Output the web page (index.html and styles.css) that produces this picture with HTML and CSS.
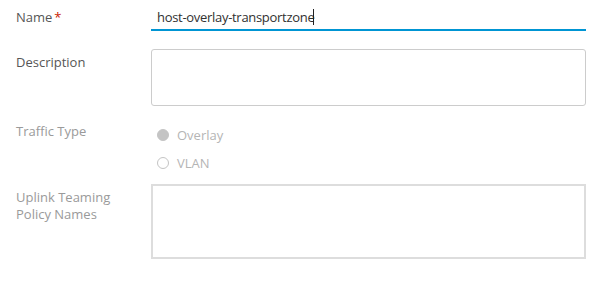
FILE: index.html
```html
<!DOCTYPE html>
<html lang="en">
<head>
    <meta charset="UTF-8">
    <title>Transport Zone</title>
    <link rel="stylesheet" href="styles.css">
</head>
<body>
    <form class="zone-form">
        <div class="form-row row-name">
            <label class="form-label required" for="name">Name</label>
            <div class="form-control">
                <input id="name" class="text-input" type="text" value="host-overlay-transportzone">
                <span class="caret"></span>
            </div>
        </div>
        <div class="form-row row-desc">
            <label class="form-label" for="desc">Description</label>
            <div class="form-control">
                <textarea id="desc" class="text-area"></textarea>
            </div>
        </div>
        <div class="form-row row-traffic">
            <span class="form-label disabled">Traffic Type</span>
            <div class="form-control radios">
                <label class="radio checked"><span class="radio-dot"></span>Overlay</label>
                <label class="radio"><span class="radio-dot"></span>VLAN</label>
            </div>
        </div>
        <div class="form-row row-uplink">
            <span class="form-label disabled">Uplink Teaming<br>Policy Names</span>
            <div class="form-control">
                <div class="list-box"></div>
            </div>
        </div>
    </form>
</body>
</html>
```

FILE: styles.css
```css
:root {
    --label-color: #565656;
    --disabled-color: #9a9a9a;
    --radio-text: #b5b5b5;
    --accent: #0095d3;
    --required: #c92100;
    --border: #cccccc;
    --border-light: #dddddd;
}

body {
    margin: 0;
    background: #fff;
    font-family: "Open Sans", Arial, sans-serif;
    font-size: 13px;
    color: var(--label-color);
}

.zone-form {
    padding: 5px 16px 0 16px;
}

.form-row {
    display: flex;
}

.form-label {
    width: 135px;
    flex: 0 0 135px;
    line-height: 16px;
}

.form-label.disabled {
    color: var(--disabled-color);
}

.required::after {
    content: "*";
    color: var(--required);
    margin-left: 2px;
}

.form-control {
    width: 435px;
    position: relative;
}

/* name */
.row-name .form-label {
    padding-top: 4px;
}

.text-input {
    display: block;
    box-sizing: border-box;
    width: 100%;
    height: 26px;
    margin: 0;
    padding: 0 6px 1px;
    border: none;
    border-bottom: 2px solid var(--accent);
    font-family: inherit;
    font-size: 13px;
    letter-spacing: -0.3px;
    color: #313131;
    outline: none;
}

.caret {
    position: absolute;
    left: 162px;
    top: 4px;
    width: 1px;
    height: 16px;
    background: #222;
}

/* description */
.row-desc {
    margin-top: 18px;
}

.row-desc .form-label {
    padding-top: 5px;
}

.text-area {
    display: block;
    box-sizing: border-box;
    width: 100%;
    height: 57px;
    margin: 0;
    border: 1px solid var(--border);
    border-radius: 3px;
    resize: none;
}

/* traffic type */
.row-traffic {
    margin-top: 17px;
}

.radios {
    display: flex;
    flex-direction: column;
    gap: 12px;
    padding-top: 4px;
}

.radio {
    display: flex;
    align-items: center;
    height: 16px;
    padding-left: 6px;
    color: var(--radio-text);
}

.radio-dot {
    width: 12px;
    height: 12px;
    box-sizing: border-box;
    border-radius: 50%;
    border: 1px solid #c4c4c4;
    margin-right: 8px;
}

.radio.checked .radio-dot {
    background: #c4c4c4;
}

/* uplink */
.row-uplink {
    margin-top: 13px;
}

.row-uplink .form-label {
    padding-top: 5px;
    line-height: 17px;
}

.list-box {
    box-sizing: border-box;
    height: 75px;
    border: 2px solid var(--border-light);
}
```
